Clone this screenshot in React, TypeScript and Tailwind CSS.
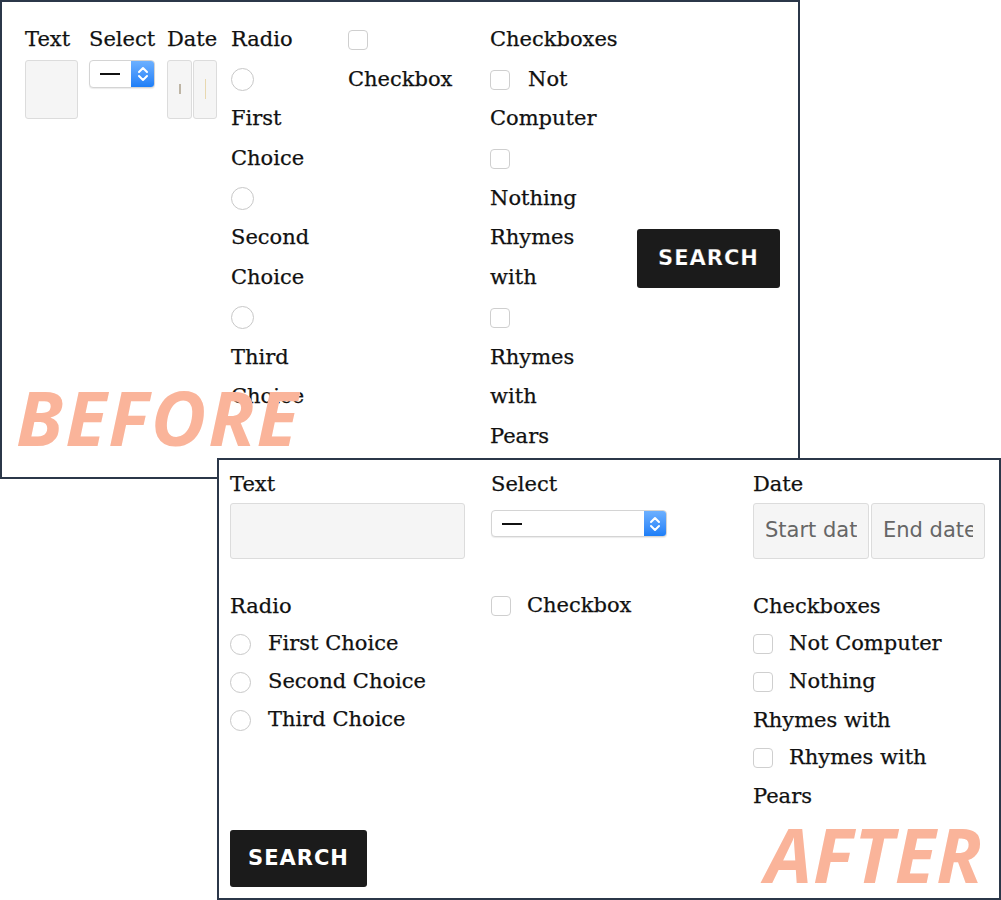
import React from "react";

const serif = "font-['DejaVu_Serif',serif] [-webkit-text-stroke:0.25px_#111]";

function SelectBox({ w, h, blueW }: { w: number; h: number; blueW: number }) {
  return (
    <div
      className="flex items-stretch rounded-[4px] border border-[#d4d4d4] bg-white shadow-[0_1px_1px_rgba(0,0,0,0.08)] overflow-hidden"
      style={{ width: w, height: h }}
    >
      <div className="flex-1 flex items-center pl-[10px]">
        <div className="w-[20px] h-[2px] bg-[#111]" />
      </div>
      <div
        className="flex items-center justify-center bg-gradient-to-b from-[#6cb0ff] to-[#1c7ef7]"
        style={{ width: blueW }}
      >
        <svg width="12" height="18" viewBox="0 0 12 18" fill="none" stroke="white" strokeWidth="2" strokeLinecap="round" strokeLinejoin="round">
          <path d="M2 7 L6 3 L10 7" />
          <path d="M2 11 L6 15 L10 11" />
        </svg>
      </div>
    </div>
  );
}

function Radio({ size }: { size: number }) {
  return (
    <div
      className="rounded-full border border-[#c8c8c8] bg-white shrink-0"
      style={{ width: size, height: size }}
    />
  );
}

function Check() {
  return <div className="w-[20px] h-[20px] rounded-[4px] border border-[#cfcfcf] bg-white shrink-0" />;
}

function SearchBtn({ w, h }: { w: number; h: number }) {
  return (
    <div
      className="bg-[#1b1b1b] rounded-[3px] flex items-center justify-center text-white font-['DejaVu_Sans',sans-serif] font-bold text-[21px] tracking-[1px]"
      style={{ width: w, height: h }}
    >
      SEARCH
    </div>
  );
}

function Before() {
  const L = "h-[39.7px] leading-[39.7px] whitespace-nowrap";
  const RL = "h-[39.7px] flex items-center";
  return (
    <div className="absolute left-0 top-0 w-[800px] h-[479px] border-2 border-[#2b3749] bg-white">
      <div className={`flex items-start pl-[23px] pt-[18px] text-[21px] text-[#111] ${serif}`}>
        <div className="w-[64px]">
          <div className={L}>Text</div>
          <div className="w-[53px] h-[59px] bg-[#f5f5f5] border border-[#dcdcdc] rounded-[3px]" />
        </div>
        <div className="w-[78px]">
          <div className={L}>Select</div>
          <SelectBox w={66} h={28} blueW={23} />
        </div>
        <div className="w-[64px]">
          <div className={L}>Date</div>
          <div className="flex gap-[1px]">
            <div className="w-[25px] h-[59px] bg-[#f5f5f5] border border-[#dcdcdc] rounded-[3px] flex items-center justify-center">
              <div className="w-[2px] h-[10px] bg-[#9a8a70] opacity-60" />
            </div>
            <div className="w-[24px] h-[59px] bg-[#f5f5f5] border border-[#dcdcdc] rounded-[3px] flex items-center justify-center">
              <div className="w-[1px] h-[20px] bg-[#e8d8b0]" />
            </div>
          </div>
        </div>
        <div className="w-[117px]">
          <div className={L}>Radio</div>
          <div className={RL}><Radio size={23} /></div>
          <div className={L}>First</div>
          <div className={L}>Choice</div>
          <div className={RL}><Radio size={23} /></div>
          <div className={L}>Second</div>
          <div className={L}>Choice</div>
          <div className={RL}><Radio size={23} /></div>
          <div className={L}>Third</div>
          <div className={L}>Choice</div>
        </div>
        <div className="w-[142px]">
          <div className={RL}><Check /></div>
          <div className={L}>Checkbox</div>
        </div>
        <div className="w-[147px]">
          <div className={L}>Checkboxes</div>
          <div className={`${RL} gap-[18px]`}><Check /><span>Not</span></div>
          <div className={L}>Computer</div>
          <div className={RL}><Check /></div>
          <div className={L}>Nothing</div>
          <div className={L}>Rhymes</div>
          <div className={L}>with</div>
          <div className={RL}><Check /></div>
          <div className={L}>Rhymes</div>
          <div className={L}>with</div>
          <div className={L}>Pears</div>
        </div>
        <div className="mt-[209px]">
          <SearchBtn w={143} h={59} />
        </div>
      </div>
      <div className="absolute left-[14px] top-[377px] text-[76px] leading-none italic font-bold tracking-[2px] text-[#fab49a] font-['Open_Sans',sans-serif]">
        BEFORE
      </div>
    </div>
  );
}

function After() {
  const L = "h-[38px] leading-[38px] whitespace-nowrap";
  const RL = "h-[38px] flex items-center";
  const dateInput =
    "h-[56px] bg-[#f5f5f5] border border-[#dcdcdc] rounded-[3px] px-[11px] flex items-center text-[21px] text-[#666] font-['DejaVu_Sans',sans-serif]";
  return (
    <div className="absolute left-[217px] top-[458px] w-[784px] h-[442px] border-2 border-[#2b3749] bg-white">
      <div className={`pl-[11px] pt-[5px] text-[21px] text-[#111] ${serif}`}>
        <div className="grid grid-cols-[261px_262px_1fr] items-start">
          <div>
            <div className={L}>Text</div>
            <div className="w-[235px] h-[56px] bg-[#f5f5f5] border border-[#dcdcdc] rounded-[3px]" />
          </div>
          <div>
            <div className={L}>Select</div>
            <div className="mt-[7px]">
              <SelectBox w={176} h={27} blueW={22} />
            </div>
          </div>
          <div>
            <div className={L}>Date</div>
            <div className="flex gap-[2px] [-webkit-text-stroke:0]">
              <div className={`${dateInput} w-[116px]`}>
                <div className="flex-1 overflow-hidden whitespace-nowrap">Start date</div>
              </div>
              <div className={`${dateInput} w-[114px]`}>
                <div className="flex-1 overflow-hidden whitespace-nowrap">End date</div>
              </div>
            </div>
          </div>
        </div>
        <div className="grid grid-cols-[261px_262px_1fr] items-start mt-[28px]">
          <div>
            <div className={L}>Radio</div>
            <div className={`${RL} gap-[17px]`}><Radio size={21} /><span>First Choice</span></div>
            <div className={`${RL} gap-[17px]`}><Radio size={21} /><span>Second Choice</span></div>
            <div className={`${RL} gap-[17px]`}><Radio size={21} /><span>Third Choice</span></div>
          </div>
          <div>
            <div className={`${RL} gap-[16px]`}><Check /><span>Checkbox</span></div>
          </div>
          <div>
            <div className={L}>Checkboxes</div>
            <div className={`${RL} gap-[16px]`}><Check /><span>Not Computer</span></div>
            <div className={`${RL} gap-[16px]`}><Check /><span>Nothing</span></div>
            <div className={L}>Rhymes with</div>
            <div className={`${RL} gap-[16px]`}><Check /><span>Rhymes with</span></div>
            <div className={L}>Pears</div>
          </div>
        </div>
        <div className="mt-[15px] [-webkit-text-stroke:0]">
          <SearchBtn w={137} h={57} />
        </div>
      </div>
      <div className="absolute left-[546px] top-[357px] text-[75px] leading-none italic font-bold tracking-[1px] text-[#fab49a] font-['Open_Sans',sans-serif]">
        AFTER
      </div>
    </div>
  );
}

export default function App() {
  return (
    <div className="relative w-[1001px] h-[900px] bg-white overflow-hidden">
      <Before />
      <After />
    </div>
  );
}
